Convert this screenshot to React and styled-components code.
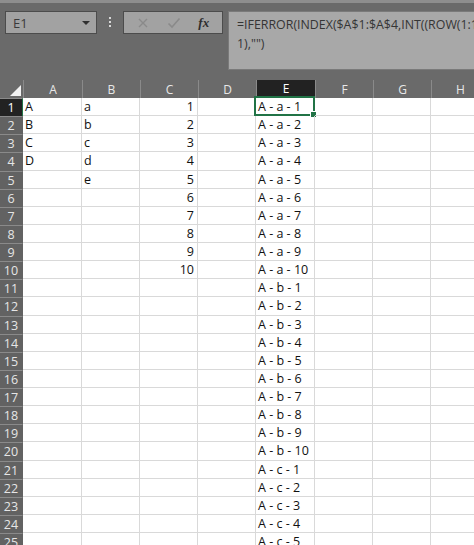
import React from "react";
import styled, { createGlobalStyle } from "styled-components";

const GlobalStyle = createGlobalStyle`
    html, body {
        margin: 0;
        padding: 0;
        background: #6a6a6a;
        font-family: "Open Sans", "Noto Sans", sans-serif;
    }
`;

const Sheet = styled.div`
    width: 474px;
    height: 545px;
    overflow: hidden;
    background: #6a6a6a;
    border-top: 3px solid #8e8e8e;
    box-sizing: border-box;
`;

const Toolbar = styled.div`
    display: flex;
    align-items: flex-start;
    height: 77px;
    padding: 8px 0 0 5px;
    box-sizing: border-box;
`;

const NameBox = styled.div`
    display: flex;
    align-items: center;
    justify-content: space-between;
    width: 92px;
    height: 23px;
    box-sizing: border-box;
    background: #a2a2a2;
    border: 1px solid #4c4c4c;
    padding: 0 6px 0 7px;
    font-size: 13px;
    color: #3a3a3a;
`;

const Caret = styled.span`
    width: 0;
    height: 0;
    border-left: 4px solid transparent;
    border-right: 4px solid transparent;
    border-top: 4px solid #303030;
`;

const Grip = styled.div`
    display: flex;
    flex-direction: column;
    gap: 2px;
    margin: 6px 12px 0 12px;

    span {
        width: 2px;
        height: 2px;
        background: #d8d8d8;
    }
`;

const Buttons = styled.div`
    display: flex;
    align-items: center;
    justify-content: space-around;
    width: 100px;
    height: 23px;
    box-sizing: border-box;
    background: #a2a2a2;
    border: 1px solid #4c4c4c;
    padding: 0 4px;
`;

const Fx = styled.span`
    font-family: "Liberation Serif", serif;
    font-style: italic;
    font-weight: bold;
    font-size: 13px;
    color: #2e2e2e;
`;

const Formula = styled.div`
    flex: 1;
    margin-left: 5px;
    height: 59px;
    box-sizing: border-box;
    background: #a8a8a8;
    border: 1px solid #7a7a7a;
    border-right: none;
    padding: 3px 0 0 8px;
    font-size: 12.4px;
    line-height: 19px;
    color: #353535;
    white-space: pre;
    overflow: hidden;
`;

const Grid = styled.div`
    display: grid;
    grid-template-columns: 23px 59px 58px 58px 58px 59px 58px 58px 58px;
    grid-template-rows: 18px;
    grid-auto-rows: 18.125px;
    background: #fff;
`;

const Corner = styled.div`
    position: relative;
    background: #6a6a6a;

    &::after {
        content: "";
        position: absolute;
        right: 2px;
        bottom: 2px;
        border-left: 11px solid transparent;
        border-bottom: 11px solid #f2f2f2;
    }
`;

const ColHead = styled.div`
    display: flex;
    align-items: center;
    justify-content: center;
    background: ${p => (p.active ? "#222" : "#6a6a6a")};
    color: ${p => (p.active ? "#fff" : "#e8e8e8")};
    border-left: 1px solid #8a8a8a;
    border-bottom: ${p => (p.active ? "1px solid #217346" : "none")};
    font-size: 12px;
    box-sizing: border-box;
`;

const RowHead = styled.div`
    display: flex;
    align-items: center;
    justify-content: center;
    background: ${p => (p.active ? "#222" : "#626262")};
    color: ${p => (p.active ? "#fff" : "#e6e6e6")};
    border-top: 1px solid #8a8a8a;
    border-right: 1px solid ${p => (p.active ? "#217346" : "#626262")};
    font-size: 12.5px;
    box-sizing: border-box;
`;

const Cell = styled.div`
    position: relative;
    display: flex;
    align-items: center;
    justify-content: ${p => (p.num ? "flex-end" : "flex-start")};
    padding: ${p => (p.num ? "0 3px 0 0" : "0 0 0 2px")};
    border-right: 1px solid #d9d9d9;
    border-bottom: 1px solid #d9d9d9;
    box-sizing: border-box;
    font-size: 12.5px;
    color: #111;
    white-space: nowrap;
`;

const Selection = styled.div`
    position: absolute;
    left: -2px;
    top: -2px;
    right: -1px;
    bottom: -1px;
    border: 2px solid #217346;

    &::after {
        content: "";
        position: absolute;
        right: -4px;
        bottom: -4px;
        width: 5px;
        height: 5px;
        background: #217346;
        border: 1px solid #fff;
    }
`;

const COLS = ["A", "B", "C", "D", "E", "F", "G", "H"];
const colA = ["A", "B", "C", "D"];
const colB = ["a", "b", "c", "d", "e"];

const valueFor = (row, col) => {
    if (col === "A") return colA[row - 1] || "";
    if (col === "B") return colB[row - 1] || "";
    if (col === "C") return row <= 10 ? String(row) : "";
    if (col === "E") {
        const block = Math.floor((row - 1) / 10);
        const n = ((row - 1) % 10) + 1;
        return `A - ${colB[block]} - ${n}`;
    }
    return "";
};

const App = () => {
    const rows = Array.from({ length: 25 }, (_, i) => i + 1);

    return (
        <Sheet>
            <GlobalStyle />
            <Toolbar>
                <NameBox>
                    E1
                    <Caret />
                </NameBox>
                <Grip>
                    <span />
                    <span />
                    <span />
                </Grip>
                <Buttons>
                    <svg width="12" height="12" viewBox="0 0 12 12">
                        <path d="M2 2 L10 10 M10 2 L2 10" stroke="#8a8a8a" strokeWidth="1.4" />
                    </svg>
                    <svg width="14" height="12" viewBox="0 0 14 12">
                        <path d="M1.5 6.5 L5 10 L12.5 1.5" stroke="#8a8a8a" strokeWidth="1.6" fill="none" />
                    </svg>
                    <Fx>fx</Fx>
                </Buttons>
                <Formula>{'=IFERROR(INDEX($A$1:$A$4,INT((ROW(1:1\n1),"")'}</Formula>
            </Toolbar>
            <Grid>
                <Corner />
                {COLS.map(c => (
                    <ColHead key={c} active={c === "E"}>
                        {c}
                    </ColHead>
                ))}
                {rows.map(r => (
                    <React.Fragment key={r}>
                        <RowHead active={r === 1}>{r}</RowHead>
                        {COLS.map(c => (
                            <Cell key={c} num={c === "C"}>
                                {valueFor(r, c)}
                                {r === 1 && c === "E" && <Selection />}
                            </Cell>
                        ))}
                    </React.Fragment>
                ))}
            </Grid>
        </Sheet>
    );
};

export default App;
